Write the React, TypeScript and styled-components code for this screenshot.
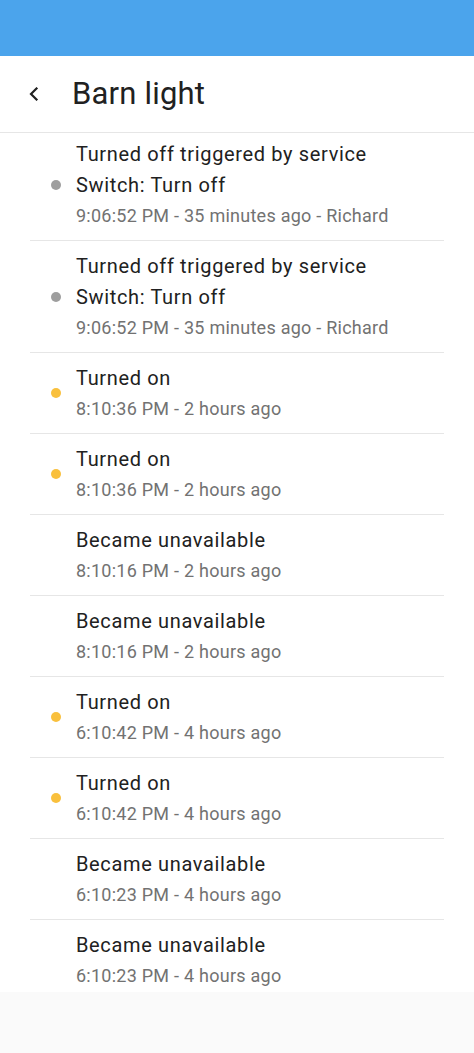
import React from "react";
import styled, { createGlobalStyle } from "styled-components";

const GlobalStyle = createGlobalStyle`
  html, body {
    margin: 0;
    padding: 0;
    background: #fafafa;
  }
  body {
    font-family: Roboto, "Noto Sans", "Liberation Sans", sans-serif;
    -webkit-font-smoothing: antialiased;
  }
`;

const Page = styled.div`
  width: 474px;
  height: 1053px;
  display: flex;
  flex-direction: column;
  background: #fafafa;
  overflow: hidden;
`;

const StatusBar = styled.div`
  height: 56px;
  flex: none;
  background: #4ba4ec;
`;

const Header = styled.header`
  height: 76px;
  flex: none;
  display: flex;
  align-items: center;
  background: #ffffff;
  border-bottom: 1px solid #e6e6e6;
`;

const BackButton = styled.button`
  width: 72px;
  height: 76px;
  padding: 0 0 0 28px;
  margin: 0;
  border: none;
  background: transparent;
  display: flex;
  align-items: center;
  justify-content: flex-start;
  box-sizing: border-box;
  color: #212121;
  cursor: pointer;
`;

const Title = styled.h1`
  margin: 0;
  font-size: 31px;
  font-weight: 400;
  color: #212121;
  letter-spacing: 0.2px;
  padding-bottom: 2px;
`;

const List = styled.div`
  height: 859px;
  flex: none;
  overflow: hidden;
  background: #ffffff;
  padding: 0 30px;
`;

const Row = styled.div<{ $first?: boolean }>`
  display: flex;
  align-items: center;
  padding: ${(p) => (p.$first ? "6px" : "10px")} 0 10px 0;
  border-top: ${(p) => (p.$first ? "none" : "1px solid #e6e6e6")};
`;

const DotCell = styled.div`
  width: 46px;
  flex: none;
  display: flex;
  align-items: center;
  padding-left: 21px;
  box-sizing: border-box;
`;

const Dot = styled.span<{ $color?: string }>`
  width: 10px;
  height: 10px;
  border-radius: 50%;
  background: ${(p) => p.$color ?? "transparent"};
`;

const Texts = styled.div`
  display: flex;
  flex-direction: column;
  min-width: 0;
`;

const Primary = styled.div`
  font-size: 20px;
  line-height: 31px;
  color: #212121;
  letter-spacing: 0.65px;
  white-space: nowrap;
`;

const Secondary = styled.div`
  font-size: 18px;
  line-height: 29px;
  color: #727272;
  letter-spacing: 0.25px;
  white-space: nowrap;
`;

type Entry = {
  lines: string[];
  meta: string;
  dot?: string;
};

const GRAY = "#9e9e9e";
const YELLOW = "#f9c03d";

const entries: Entry[] = [
  {
    lines: ["Turned off triggered by service", "Switch: Turn off"],
    meta: "9:06:52 PM - 35 minutes ago - Richard",
    dot: GRAY,
  },
  {
    lines: ["Turned off triggered by service", "Switch: Turn off"],
    meta: "9:06:52 PM - 35 minutes ago - Richard",
    dot: GRAY,
  },
  { lines: ["Turned on"], meta: "8:10:36 PM - 2 hours ago", dot: YELLOW },
  { lines: ["Turned on"], meta: "8:10:36 PM - 2 hours ago", dot: YELLOW },
  { lines: ["Became unavailable"], meta: "8:10:16 PM - 2 hours ago" },
  { lines: ["Became unavailable"], meta: "8:10:16 PM - 2 hours ago" },
  { lines: ["Turned on"], meta: "6:10:42 PM - 4 hours ago", dot: YELLOW },
  { lines: ["Turned on"], meta: "6:10:42 PM - 4 hours ago", dot: YELLOW },
  { lines: ["Became unavailable"], meta: "6:10:23 PM - 4 hours ago" },
  { lines: ["Became unavailable"], meta: "6:10:23 PM - 4 hours ago" },
];

export default function App() {
  return (
    <>
      <GlobalStyle />
      <Page>
        <StatusBar />
        <Header>
          <BackButton aria-label="Back">
            <svg width="12" height="14" viewBox="0 0 12 14" fill="none">
              <polyline
                points="8.5,1.5 3,7 8.5,12.5"
                stroke="#212121"
                strokeWidth="2.2"
                strokeLinecap="square"
                strokeLinejoin="miter"
              />
            </svg>
          </BackButton>
          <Title>Barn light</Title>
        </Header>
        <List>
          {entries.map((e, i) => (
            <Row key={i} $first={i === 0}>
              <DotCell>
                <Dot $color={e.dot} />
              </DotCell>
              <Texts>
                {e.lines.map((l, j) => (
                  <Primary key={j}>{l}</Primary>
                ))}
                <Secondary>{e.meta}</Secondary>
              </Texts>
            </Row>
          ))}
        </List>
      </Page>
    </>
  );
}
